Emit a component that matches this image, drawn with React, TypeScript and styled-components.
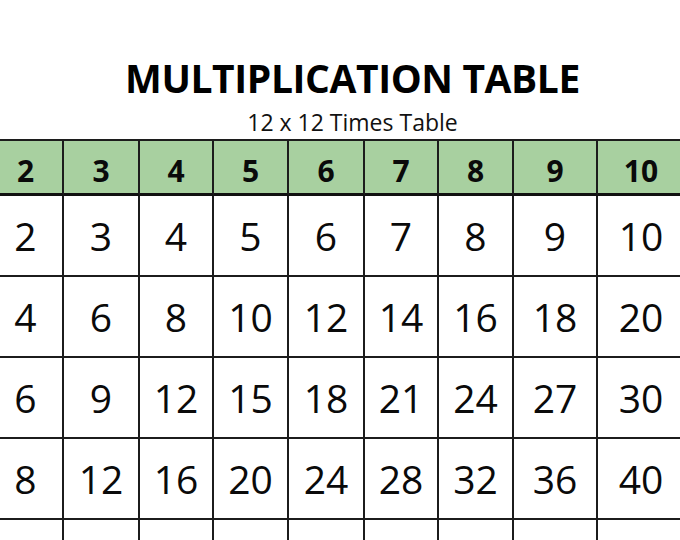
import React from 'react';
import styled, { createGlobalStyle } from 'styled-components';

const columns = [2, 3, 4, 5, 6, 7, 8, 9, 10];
const rows = [1, 2, 3, 4];
const colWidths = [75, 76, 74, 75, 76, 74, 75, 84, 88];

const GlobalStyle = createGlobalStyle`
  html, body {
    margin: 0;
    padding: 0;
    background: #ffffff;
  }

  body {
    font-family: 'Open Sans', 'Liberation Sans', sans-serif;
    color: #111111;
    overflow: hidden;
  }
`;

const App = () => {
  return (
    <Page>
      <GlobalStyle />
      <Heading>
        <Title>MULTIPLICATION TABLE</Title>
        <Subtitle>12 x 12 Times Table</Subtitle>
      </Heading>
      <Grid $cols={colWidths.map((w) => `${w}px`).join(' ')}>
        {columns.map((c) => (
          <HeadCell key={`h-${c}`}>{c}</HeadCell>
        ))}
        {rows.map((r) =>
          columns.map((c) => <Cell key={`${r}-${c}`}>{r * c}</Cell>),
        )}
        {/* next row only shows its top edge in view */}
        {columns.map((c) => (
          <Cell key={`tail-${c}`} />
        ))}
      </Grid>
    </Page>
  );
};

const Page = styled.div`
  width: 680px;
  height: 540px;
  overflow: hidden;
  display: flex;
  flex-direction: column;
`;

const Heading = styled.header`
  display: flex;
  flex-direction: column;
  align-items: center;
  padding: 56px 0 0 25px;
`;

const Title = styled.h1`
  margin: 0;
  font-size: 39px;
  line-height: 44px;
  font-weight: 700;
  letter-spacing: -0.4px;
  color: #000000;
`;

const Subtitle = styled.p`
  margin: 10px 0 0;
  font-size: 23px;
  line-height: 25px;
  color: #111111;
`;

const Grid = styled.div<{ $cols: string }>`
  display: grid;
  grid-template-columns: ${(p) => p.$cols};
  grid-template-rows: 57px;
  grid-auto-rows: 81px;
  margin: 4px 0 0 -11px;
`;

const HeadCell = styled.div`
  display: flex;
  align-items: center;
  justify-content: center;
  box-sizing: border-box;
  padding-top: 6px;
  background: #a8d0a0;
  border-top: 2px solid #1c1c1c;
  border-bottom: 3px solid #111111;
  border-right: 2px solid #1c1c1c;
  font-size: 30px;
  font-weight: 700;
  color: #0a0a0a;
`;

const Cell = styled.div`
  display: flex;
  align-items: center;
  justify-content: center;
  box-sizing: border-box;
  border-right: 2px solid #1c1c1c;
  border-bottom: 2px solid #1c1c1c;
  font-size: 39px;
  font-weight: 400;
  color: #0a0a0a;
`;

export default App;
